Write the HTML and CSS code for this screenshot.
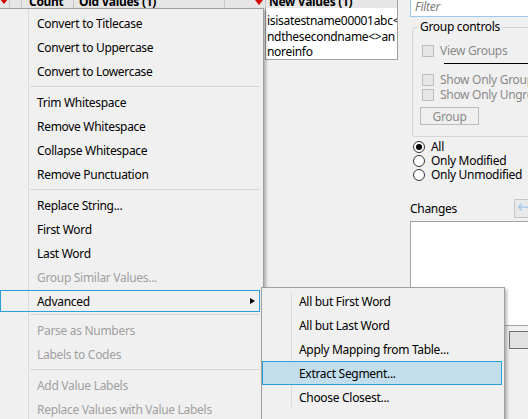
FILE: index.html
```html
<!DOCTYPE html>
<html>
<head>
<meta charset="utf-8">
<link rel="stylesheet" href="styles.css">
</head>
<body>
<div class="window">
  <div class="table">
    <div class="thead">
      <div class="th th-arrow"><span class="tri"></span></div>
      <div class="th th-blank"></div>
      <div class="th th-count">Count</div>
      <div class="th th-old">Old Values (1)</div>
      <div class="th th-menu"><span class="tri"></span></div>
      <div class="th th-new">New Values (1)</div>
    </div>
    <div class="cell-new">
      <div>isisatestname00001abc&lt;</div>
      <div>ndthesecondname&lt;&gt;an</div>
      <div>noreinfo</div>
    </div>
  </div>
  <div class="panel">
    <div class="filter">Filter</div>
    <fieldset class="group">
      <legend>Group controls</legend>
      <div class="check first"><span class="box"></span>View Groups</div>
      <div class="rule"></div>
      <div class="check second"><span class="box"></span>Show Only Group(s)</div>
      <div class="check"><span class="box"></span>Show Only Ungrouped</div>
      <div class="btn btn-group">Group</div>
    </fieldset>
    <div class="radios">
      <div class="radio"><span class="circle on"></span>All</div>
      <div class="radio"><span class="circle"></span>Only Modified</div>
      <div class="radio"><span class="circle"></span>Only Unmodified</div>
    </div>
    <div class="changes-head">
      <span>Changes</span>
      <div class="btn btn-undo">
        <svg width="14" height="12" viewBox="0 0 14 12"><path d="M5 1.5 L1.5 5 L5 8.5 M1.5 5 H9 Q12.5 5 12.5 8.5 V11" fill="none" stroke="#a8c9e8" stroke-width="1.4"/></svg>
      </div>
    </div>
    <div class="changes"></div>
    <div class="btn btn-ok"></div>
  </div>
</div>

<div class="menu menu-main">
  <div class="item">Convert to Titlecase</div>
  <div class="item">Convert to Uppercase</div>
  <div class="item">Convert to Lowercase</div>
  <div class="sep"></div>
  <div class="item">Trim Whitespace</div>
  <div class="item">Remove Whitespace</div>
  <div class="item">Collapse Whitespace</div>
  <div class="item">Remove Punctuation</div>
  <div class="sep"></div>
  <div class="item">Replace String...</div>
  <div class="item">First Word</div>
  <div class="item">Last Word</div>
  <div class="item disabled">Group Similar Values...</div>
  <div class="item open">Advanced<span class="arrow"></span></div>
  <div class="sep sep-tight"></div>
  <div class="item disabled">Parse as Numbers</div>
  <div class="item disabled">Labels to Codes</div>
  <div class="sep"></div>
  <div class="item disabled">Add Value Labels</div>
  <div class="item disabled">Replace Values with Value Labels</div>
</div>

<div class="menu menu-sub">
  <div class="item">All but First Word</div>
  <div class="item">All but Last Word</div>
  <div class="item">Apply Mapping from Table...</div>
  <div class="item hover">Extract Segment...</div>
  <div class="item">Choose Closest...</div>
</div>
</body>
</html>
```

FILE: styles.css
```css
* { box-sizing: border-box; }
html, body { margin: 0; }
body {
  position: relative;
  width: 528px;
  height: 419px;
  overflow: hidden;
  background: #f0f0f0;
  font-family: "Noto Sans", "Open Sans", sans-serif;
  font-size: 12px;
  letter-spacing: -0.3px;
  color: #000;
}

.window { display: flex; gap: 12px; width: 560px; height: 419px; }

/* table */
.table { width: 398px; flex: none; }
.thead {
  display: flex;
  height: 16px;
  margin-top: -8px;
  background: #e6e6e6;
  font-weight: bold;
  line-height: 16px;
}
.th {
  border-right: 1px solid #c8c8c8;
  padding-top: 2px;
  white-space: nowrap;
  overflow: hidden;
  flex: none;
}
.th-arrow { width: 10px; display: flex; align-items: flex-end; padding-bottom: 4px; }
.th-blank { width: 12px; }
.th-count { width: 52px; padding-left: 7px; }
.th-old { width: 151px; padding-left: 5px; }
.th-menu { width: 41px; display: flex; align-items: flex-end; justify-content: flex-end; padding: 0 2px 3px 0; }
.th-new { width: 132px; padding-left: 3px; border-right-color: #a0a0a0; }
.tri {
  width: 0; height: 0;
  border-left: 4.5px solid transparent;
  border-right: 4.5px solid transparent;
  border-top: 5px solid #d40000;
}
.cell-new {
  margin-left: 265px;
  width: 133px;
  height: 52px;
  padding: 5px 0 0 1px;
  background: #fff;
  border: 1px solid #a0a0a0;
  border-top: none;
  line-height: 15.5px;
  white-space: nowrap;
  overflow: hidden;
}

/* right panel */
.panel { width: 140px; flex: none; display: flex; flex-direction: column; }
.filter {
  height: 24px;
  margin-top: -7px;
  padding: 5px 0 0 4px;
  line-height: 16px;
  background: #fff;
  border: 1px solid #9cc6ea;
  color: #7a7a7a;
  font-style: italic;
}
.group {
  margin: 2px 0 0 2px;
  padding: 0 0 11px 4px;
  min-width: 0;
  border: 1px solid #d5d5d5;
  border-radius: 3px;
  display: flex;
  flex-direction: column;
}
.group legend { padding: 0 3px; line-height: 16px; }
.check {
  display: flex;
  align-items: center;
  gap: 6px;
  height: 15px;
  line-height: 14px;
  margin-left: 5px;
  color: #8a8a8a;
  white-space: nowrap;
}
.check.first { margin-top: 8px; }
.check.second { margin-top: 8px; }
.box { width: 12px; height: 12px; flex: none; background: #e6e6e6; border: 1px solid #bcbcbc; }
.rule { height: 1px; margin: 5px 0 0 27px; background: #000; }
.btn {
  display: flex;
  align-items: center;
  justify-content: center;
  background: #e8e8e8;
  border: 1px solid #adadad;
}
.btn-group {
  width: 59px;
  height: 18px;
  margin: 5px 0 0 3px;
  color: #8a8a8a;
  background: #efefef;
  border-color: #bcbcbc;
}
.radios { margin: 3px 0 0 3px; display: flex; flex-direction: column; }
.radio { display: flex; align-items: center; gap: 6px; height: 14.2px; line-height: 14px; white-space: nowrap; }
.circle {
  width: 12px; height: 12px; flex: none;
  border: 1px solid #333;
  border-radius: 50%;
  background: #fff;
  display: flex; align-items: center; justify-content: center;
}
.circle.on::after { content: ""; width: 6px; height: 6px; border-radius: 50%; background: #000; }
.changes-head { display: flex; align-items: center; height: 19px; margin-top: 16px; }
.btn-undo {
  width: 30px; height: 19px;
  margin-left: auto; margin-right: 6px;
  justify-content: flex-start;
  padding-left: 2px;
  background: #e9e9e9;
  border-color: #c6c6c6;
}
.changes { height: 105px; margin-top: 3px; background: #fff; border: 1px solid #a5a5a5; }
.btn-ok { width: 50px; height: 18px; margin: 5px 0 0 99px; background: #e1e1e1; border-color: #707070; }

/* context menus */
.menu {
  position: absolute;
  display: flex;
  flex-direction: column;
  border: 1px solid #a0a0a0;
  box-shadow: 2px 2px 3px rgba(0, 0, 0, 0.28);
  white-space: nowrap;
}
.menu-main {
  left: -1px;
  top: 8px;
  width: 265px;
  height: 420px;
  padding-top: 2px;
  background: linear-gradient(#dcdcdc, #dcdcdc) 28px 0 / 1px 100% no-repeat, #f0f0f0;
}
.menu-sub {
  left: 261px;
  top: 287px;
  width: 244px;
  height: 140px;
  padding-top: 1px;
  background: linear-gradient(#dcdcdc, #dcdcdc) 29px 4px / 1px 115px no-repeat, #f0f0f0;
}
.item {
  display: flex;
  align-items: center;
  flex: none;
  border: 1px solid transparent;
}
.menu-main .item { height: 22px; margin: 1px 3px 1px 0; padding-left: 36px; }
.menu-sub .item { height: 24px; margin-right: 2px; padding-left: 36px; }
.item.disabled { color: #a0a0a0; }
.item.open { border-color: #2a9fd9; }
.item.hover { background: #c2ddec; border-color: #2a9fd9; }
.arrow {
  margin-left: auto;
  margin-right: 4px;
  width: 0; height: 0;
  border-left: 5px solid #000;
  border-top: 3px solid transparent;
  border-bottom: 3px solid transparent;
}
.sep { height: 1px; flex: none; margin: 3px 3px 3px 30px; background: #d7d7d7; }
.sep.sep-tight { margin-top: 1px; }
```
